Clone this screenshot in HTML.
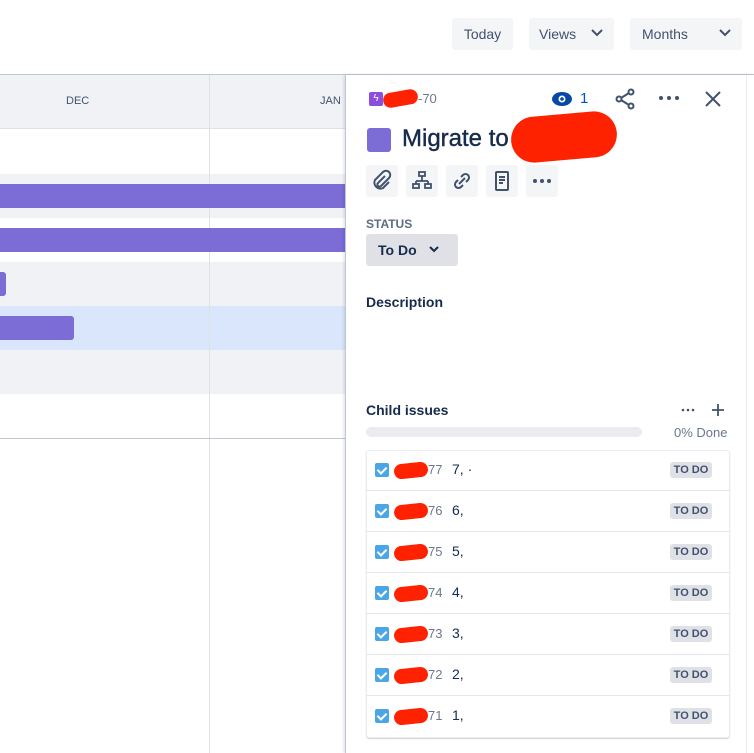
<!DOCTYPE html>
<html><head><style>
*{box-sizing:border-box;margin:0;padding:0}
body{width:754px;height:753px;overflow:hidden;background:#fff;font-family:"Liberation Sans",sans-serif;position:relative;color:#172b4d}
.a{position:absolute}
.btn{position:absolute;top:18px;height:32px;background:#f4f5f7;border-radius:3px;font-size:14px;color:#42526e;line-height:32px}
.row{position:absolute;left:0;width:346px;height:44px}
.bar{position:absolute;height:24px;background:#7b6cd6;border-radius:3px}
.red{position:absolute;background:#ff2200;border-radius:12px;transform:rotate(-6deg)}
.ib{position:absolute;top:165px;width:32px;height:32px;background:#f4f5f7;border-radius:3px}
.ci{position:absolute;left:366px;width:364px;height:41px;border-bottom:1px solid #e4e6ea;font-size:14px}
.cb{position:absolute;left:9px;top:13px;width:14px;height:14px;background:#4ba6e8;border-radius:2px}
.cb:after{content:"";position:absolute;left:4px;top:2px;width:4px;height:7px;border:solid #fff;border-width:0 2px 2px 0;transform:rotate(45deg)}
.td{position:absolute;left:304px;top:12px;width:42px;height:16px;background:#dfe1e6;border-radius:3px;font-size:11px;font-weight:bold;color:#42526e;text-align:center;line-height:16px}
.num{position:absolute;left:62px;top:12px;color:#6b778c;font-size:13px}
.tx{position:absolute;left:86px;top:11px;color:#172b4d}
</style></head><body>
<div class="btn" style="left:452px;width:61px;text-align:center">Today</div>
<div class="btn" style="left:529px;width:85px;padding-left:10px">Views</div>
<div class="btn" style="left:630px;width:112px;padding-left:12px">Months</div>
<svg class="a" style="left:590px;top:28px" width="14" height="10"><path d="M2 2l5 5 5-5" stroke="#42526e" stroke-width="2" fill="none"/></svg>
<svg class="a" style="left:718px;top:28px" width="14" height="10"><path d="M2 2l5 5 5-5" stroke="#42526e" stroke-width="2" fill="none"/></svg>

<div class="a" style="left:0;top:74px;width:754px;height:1px;background:#c1c7d0"></div>
<div class="a" style="left:0;top:75px;width:346px;height:54px;background:#f1f2f6;border-bottom:1px solid #dfe1e6"></div>
<div class="a" style="left:66px;top:95px;font-size:11px;color:#42526e">DEC</div>
<div class="a" style="left:320px;top:95px;font-size:11px;color:#42526e">JAN</div>
<div class="row" style="top:174px;background:#f1f2f6"></div>
<div class="row" style="top:262px;background:#f1f2f6"></div>
<div class="row" style="top:306px;background:#d9e6fc"></div>
<div class="row" style="top:350px;background:#f1f2f6"></div>
<div class="a" style="left:209px;top:75px;width:1px;height:678px;background:#dfe1e6"></div>
<div class="a" style="left:0;top:438px;width:346px;height:1px;background:#c1c7d0"></div>
<div class="bar" style="left:-4px;top:184px;width:350px;border-radius:0"></div>
<div class="bar" style="left:-4px;top:228px;width:350px;border-radius:0"></div>
<div class="bar" style="left:-4px;top:272px;width:10px"></div>
<div class="bar" style="left:-4px;top:316px;width:78px"></div>

<div class="a" style="left:345px;top:75px;width:409px;height:678px;background:#fff;border-left:1px solid #c1c7d0;box-shadow:-1px 0 3px rgba(9,30,66,.15)"></div>
<div class="a" style="left:746px;top:75px;width:1px;height:678px;background:#ebecf0"></div>

<div class="a" style="left:369px;top:92px;width:14px;height:14px;background:#8b4fe0;border-radius:2px;color:#fff;font-size:10px;text-align:center;line-height:14px">ϟ</div>
<div class="red" style="left:383px;top:91px;width:35px;height:15px;transform:rotate(-10deg)"></div>
<div class="a" style="left:418px;top:91px;font-size:13px;color:#6b778c">-70</div>
<svg class="a" style="left:551px;top:90px" width="22" height="18"><ellipse cx="11" cy="9" rx="10" ry="7" fill="#0747a6"/><circle cx="11" cy="9" r="3.5" fill="#fff"/><circle cx="11" cy="9" r="1.8" fill="#0747a6"/></svg>
<div class="a" style="left:580px;top:90px;font-size:15px;color:#0052cc">1</div>
<svg class="a" style="left:614px;top:88px" width="22" height="22" fill="none" stroke="#42526e" stroke-width="2"><circle cx="17" cy="4" r="2.5"/><circle cx="5" cy="11" r="2.5"/><circle cx="17" cy="18" r="2.5"/><path d="M7 10l8-5M7 12l8 5"/></svg>
<svg class="a" style="left:658px;top:94px" width="22" height="8" fill="#42526e"><circle cx="3" cy="4" r="2"/><circle cx="11" cy="4" r="2"/><circle cx="19" cy="4" r="2"/></svg>
<svg class="a" style="left:704px;top:90px" width="18" height="18" stroke="#42526e" stroke-width="2"><path d="M2 2l14 14M16 2L2 16"/></svg>

<div class="a" style="left:367px;top:128px;width:24px;height:24px;background:#7b6cd6;border-radius:3px"></div>
<div class="a" style="left:402px;top:125px;font-size:24px;color:#172b4d;-webkit-text-stroke:0.4px #172b4d">Migrate to</div>
<div class="red" style="left:511px;top:114px;width:106px;height:46px;border-radius:23px;transform:rotate(-5deg)"></div>

<div class="ib" style="left:366px"><svg width="32" height="32" fill="none" stroke="#42526e" stroke-width="2"><path d="M19 11l-7 7a2 2 0 003 3l8-8a4 4 0 00-6-6l-8 8a6 6 0 008 8l6-6"/></svg></div>
<div class="ib" style="left:406px"><svg width="32" height="32" fill="none" stroke="#42526e" stroke-width="1.8"><rect x="13" y="7" width="6" height="4"/><path d="M16 11v5M10 16h12M10 16v3M22 16v3"/><rect x="7" y="19" width="6" height="4"/><rect x="19" y="19" width="6" height="4"/></svg></div>
<div class="ib" style="left:446px"><svg width="32" height="32" fill="none" stroke="#42526e" stroke-width="2"><path d="M15 12l2-2a3.5 3.5 0 015 5l-2 2M17 20l-2 2a3.5 3.5 0 01-5-5l2-2M13 19l6-6"/></svg></div>
<div class="ib" style="left:486px"><svg width="32" height="32" fill="none" stroke="#42526e" stroke-width="2"><rect x="10" y="7" width="12" height="18" rx="1"/><path d="M13 12h6M13 15h6M13 18h4"/></svg></div>
<div class="ib" style="left:526px"><svg width="32" height="32" fill="#42526e"><circle cx="9" cy="16" r="2"/><circle cx="16" cy="16" r="2"/><circle cx="23" cy="16" r="2"/></svg></div>

<div class="a" style="left:366px;top:217px;font-size:12px;font-weight:bold;color:#5e6c84">STATUS</div>
<div class="a" style="left:366px;top:234px;width:92px;height:32px;background:#dfe1e6;border-radius:3px;font-size:14px;font-weight:bold;color:#172b4d;line-height:32px;padding-left:12px">To Do</div>
<svg class="a" style="left:429px;top:245px" width="10" height="8"><path d="M1 2l4 4 4-4" stroke="#172b4d" stroke-width="2" fill="none"/></svg>

<div class="a" style="left:366px;top:294px;font-size:14px;font-weight:bold">Description</div>
<div class="a" style="left:366px;top:402px;font-size:14px;font-weight:bold">Child issues</div>
<svg class="a" style="left:681px;top:407px" width="14" height="6" fill="#42526e"><circle cx="2" cy="3" r="1.3"/><circle cx="7" cy="3" r="1.3"/><circle cx="12" cy="3" r="1.3"/></svg>
<svg class="a" style="left:711px;top:403px" width="14" height="14" stroke="#42526e" stroke-width="1.8"><path d="M7 1v12M1 7h12"/></svg>
<div class="a" style="left:366px;top:427px;width:276px;height:10px;background:#ebecf0;border-radius:5px"></div>
<div class="a" style="left:674px;top:425px;font-size:13px;color:#6b778c">0% Done</div>

<div class="a" style="left:366px;top:450px;width:364px;height:288px;border:1px solid #ebecf0;border-radius:3px;box-shadow:0 1px 1px rgba(9,30,66,.2)"></div>
<div class="ci" style="top:450px"><div class="cb"></div><div class="red" style="left:28px;top:13px;width:34px;height:15px"></div><div class="num">77</div><div class="tx">7, ·</div><div class="td">TO DO</div></div>
<div class="ci" style="top:491px"><div class="cb"></div><div class="red" style="left:28px;top:13px;width:34px;height:15px"></div><div class="num">76</div><div class="tx">6,</div><div class="td">TO DO</div></div>
<div class="ci" style="top:532px"><div class="cb"></div><div class="red" style="left:28px;top:13px;width:34px;height:15px"></div><div class="num">75</div><div class="tx">5,</div><div class="td">TO DO</div></div>
<div class="ci" style="top:573px"><div class="cb"></div><div class="red" style="left:28px;top:13px;width:34px;height:15px"></div><div class="num">74</div><div class="tx">4,</div><div class="td">TO DO</div></div>
<div class="ci" style="top:614px"><div class="cb"></div><div class="red" style="left:28px;top:13px;width:34px;height:15px"></div><div class="num">73</div><div class="tx">3,</div><div class="td">TO DO</div></div>
<div class="ci" style="top:655px"><div class="cb"></div><div class="red" style="left:28px;top:13px;width:34px;height:15px"></div><div class="num">72</div><div class="tx">2,</div><div class="td">TO DO</div></div>
<div class="ci" style="top:696px;border-bottom:none"><div class="cb"></div><div class="red" style="left:28px;top:13px;width:34px;height:15px"></div><div class="num">71</div><div class="tx">1,</div><div class="td">TO DO</div></div>
</body></html>
